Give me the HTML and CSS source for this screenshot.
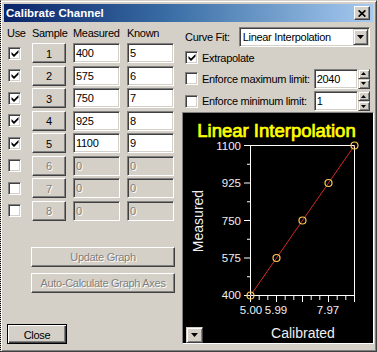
FILE: index.html
```html
<!DOCTYPE html>
<html>
<head>
<meta charset="utf-8">
<link rel="stylesheet" href="styles.css">
</head>
<body>
<div class="window">
  <div class="titlebar">
    <span class="title">Calibrate Channel</span>
    <div class="tbtn"><svg width="8" height="7" viewBox="0 0 8 7"><path d="M0.6 0.4L7.4 6.6M7.4 0.4L0.6 6.6" stroke="#000" stroke-width="1.7"/></svg></div>
  </div>
  <div class="body">
    <div class="left">
      <div class="cols hdr-row">
        <div>Use</div><div>Sample</div><div>Measured</div><div>Known</div>
      </div>
      <div class="cols rows">
        <div class="cb"><svg class="tick" width="8" height="8" viewBox="0 0 8 8"><path d="M0.5 3L3 5.5L7.5 1V3.5L3 8L0.5 5.5Z"/></svg></div><div class="btn">1</div><div class="edit">400</div><div class="edit">5</div>
        <div class="cb"><svg class="tick" width="8" height="8" viewBox="0 0 8 8"><path d="M0.5 3L3 5.5L7.5 1V3.5L3 8L0.5 5.5Z"/></svg></div><div class="btn">2</div><div class="edit">575</div><div class="edit">6</div>
        <div class="cb"><svg class="tick" width="8" height="8" viewBox="0 0 8 8"><path d="M0.5 3L3 5.5L7.5 1V3.5L3 8L0.5 5.5Z"/></svg></div><div class="btn">3</div><div class="edit">750</div><div class="edit">7</div>
        <div class="cb"><svg class="tick" width="8" height="8" viewBox="0 0 8 8"><path d="M0.5 3L3 5.5L7.5 1V3.5L3 8L0.5 5.5Z"/></svg></div><div class="btn">4</div><div class="edit">925</div><div class="edit">8</div>
        <div class="cb"><svg class="tick" width="8" height="8" viewBox="0 0 8 8"><path d="M0.5 3L3 5.5L7.5 1V3.5L3 8L0.5 5.5Z"/></svg></div><div class="btn">5</div><div class="edit">1100</div><div class="edit">9</div>
        <div class="cb"></div><div class="btn dis">6</div><div class="edit off">0</div><div class="edit off">0</div>
        <div class="cb"></div><div class="btn dis">7</div><div class="edit off">0</div><div class="edit off">0</div>
        <div class="cb"></div><div class="btn dis">8</div><div class="edit off">0</div><div class="edit off">0</div>
      </div>
      <div class="btn dis wide first">Update Graph</div>
      <div class="btn dis wide second">Auto-Calculate Graph Axes</div>
      <div class="btn close">Close</div>
    </div>
    <div class="right">
      <div class="combo-row">
        <span>Curve Fit:</span>
        <div class="combo">
          <span class="combo-text">Linear Interpolation</span>
          <div class="ddbtn"><svg width="7" height="4" viewBox="0 0 7 4"><path d="M0 0H7L3.5 4Z"/></svg></div>
        </div>
      </div>
      <div class="chk-row">
        <div class="cb"><svg class="tick" width="8" height="8" viewBox="0 0 8 8"><path d="M0.5 3L3 5.5L7.5 1V3.5L3 8L0.5 5.5Z"/></svg></div>
        <span>Extrapolate</span>
      </div>
      <div class="chk-row">
        <div class="cb"></div>
        <span>Enforce maximum limit:</span>
        <div class="spin-edit">
          <div class="edit num">2040</div>
          <div class="spin">
            <div class="sbtn"><svg width="5" height="3" viewBox="0 0 5 3"><path d="M0 3H5L2.5 0Z"/></svg></div>
            <div class="sbtn"><svg width="5" height="3" viewBox="0 0 5 3"><path d="M0 0H5L2.5 3Z"/></svg></div>
          </div>
        </div>
      </div>
      <div class="chk-row min-row">
        <div class="cb"></div>
        <span>Enforce minimum limit:</span>
        <div class="spin-edit">
          <div class="edit num">1</div>
          <div class="spin">
            <div class="sbtn"><svg width="5" height="3" viewBox="0 0 5 3"><path d="M0 3H5L2.5 0Z"/></svg></div>
            <div class="sbtn"><svg width="5" height="3" viewBox="0 0 5 3"><path d="M0 0H5L2.5 3Z"/></svg></div>
          </div>
        </div>
      </div>
      <div class="graph">
        <svg width="187" height="230" viewBox="0 0 187 230">
          <text class="gtitle" x="93.5" y="24" text-anchor="middle">Linear Interpolation</text>
          <g stroke="#fff" fill="none" stroke-width="1">
            <rect x="67.5" y="32.5" width="104" height="150"/>
            <path d="M61 32.5H67M64 51.25H67M61 70H67M64 88.75H67M61 107.5H67M64 126.25H67M61 145H67M64 163.75H67M61 182.5H67"/>
            <path d="M67.5 183V189M76.2 183V187M84.8 183V187M93.5 183V189M102.2 183V187M110.8 183V187M119.5 183V189M128.2 183V187M136.8 183V187M145.5 183V189M154.2 183V187M162.8 183V187M171.5 183V189"/>
          </g>
          <line x1="67.5" y1="182.5" x2="171.5" y2="32.5" stroke="#d42828" stroke-width="1"/>
          <g stroke="#ffc850" fill="none" stroke-width="1.2">
            <circle cx="67.5" cy="182.5" r="3.5"/>
            <circle cx="93.5" cy="145" r="3.5"/>
            <circle cx="119.5" cy="107.5" r="3.5"/>
            <circle cx="145.5" cy="70" r="3.5"/>
            <circle cx="171.5" cy="32.5" r="3.5"/>
          </g>
          <g class="ax">
            <text x="58" y="37" text-anchor="end">1100</text>
            <text x="58" y="74" text-anchor="end">925</text>
            <text x="58" y="111.5" text-anchor="end">750</text>
            <text x="58" y="149" text-anchor="end">575</text>
            <text x="58" y="186" text-anchor="end">400</text>
            <text x="68" y="201" text-anchor="middle">5.00</text>
            <text x="93" y="201" text-anchor="middle">5.99</text>
            <text x="145" y="201" text-anchor="middle">7.97</text>
          </g>
          <text class="alab" transform="translate(20,108) rotate(-90)" text-anchor="middle">Measured</text>
          <text class="alab" x="120" y="225" text-anchor="middle">Calibrated</text>
        </svg>
        <div class="gbtn"><svg width="7" height="4" viewBox="0 0 7 4"><path d="M0 0H7L3.5 4Z"/></svg></div>
      </div>
    </div>
  </div>
</div>
</body>
</html>
```

FILE: styles.css
```css
html, body {
  margin: 0;
  padding: 0;
}
body {
  background: #d4d0c8;
  font-family: "Liberation Sans", Arial, sans-serif;
  font-size: 11px;
  letter-spacing: -0.3px;
  color: #000;
}
.window {
  box-sizing: border-box;
  width: 377px;
  height: 352px;
  display: flex;
  flex-direction: column;
  background: #d4d0c8;
  border: 1px solid;
  border-color: #d4d0c8 #404040 #404040 #000;
  border-left-style: dotted;
  box-shadow: inset 1px 1px #fff, inset -1px -1px #808080;
  padding: 3px;
}
.titlebar {
  flex: none;
  height: 18px;
  display: flex;
  align-items: center;
  justify-content: space-between;
  padding: 0 3px 0 2px;
  background: linear-gradient(to right, #0a246a 0%, #3a6ea5 45%, #a6caf0 100%);
}
.title {
  color: #fff;
  font-weight: bold;
  font-size: 11.5px;
  letter-spacing: 0;
}
.tbtn {
  box-sizing: border-box;
  width: 16px;
  height: 14px;
  background: #d4d0c8;
  border: 1px solid;
  border-color: #fff #404040 #404040 #fff;
  box-shadow: inset -1px -1px #808080;
  display: flex;
  align-items: center;
  justify-content: center;
}
.body {
  flex: 1;
  min-height: 0;
  display: flex;
  gap: 7px;
  padding: 5px 2px 4px 3px;
}
.left {
  width: 168px;
  flex: none;
  display: flex;
  flex-direction: column;
}
.right {
  flex: 1;
  display: flex;
  flex-direction: column;
}
.cols {
  display: grid;
  grid-template-columns: 18px 34px 47px 47px;
  column-gap: 7px;
}
.hdr-row {
  height: 13px;
  line-height: 13px;
  margin-bottom: 3px;
}
.rows {
  grid-auto-rows: 20px;
  row-gap: 2.57px;
  align-items: center;
}
.cb {
  box-sizing: border-box;
  width: 13px;
  height: 13px;
  flex: none;
  background: #fff;
  border: 1px solid;
  border-color: #808080 #fff #fff #808080;
  box-shadow: inset 1px 1px #404040, inset -1px -1px #d4d0c8;
  display: flex;
  align-items: center;
  justify-content: center;
}
.rows .cb {
  margin-left: 1px;
}
.tick {
  display: block;
  margin-top: -1px;
}
.btn {
  box-sizing: border-box;
  height: 20px;
  background: #d4d0c8;
  border: 1px solid;
  border-color: #fff #404040 #404040 #fff;
  box-shadow: inset -1px -1px #808080;
  display: flex;
  align-items: center;
  justify-content: center;
  padding-top: 1px;
}
.dis {
  color: #808080;
  text-shadow: 1px 1px #fff;
}
.edit {
  box-sizing: border-box;
  height: 20px;
  background: #fff;
  border: 1px solid;
  border-color: #808080 #fff #fff #808080;
  box-shadow: inset 1px 1px #404040, inset -1px -1px #d4d0c8;
  padding: 1px 2px 0 2px;
  line-height: 16px;
  white-space: nowrap;
  overflow: hidden;
}
.edit.off {
  background: #d4d0c8;
  color: #808080;
  text-shadow: 1px 1px #fff;
}
.wide {
  width: 144px;
  margin-left: 24px;
}
.wide.first {
  margin-top: 26px;
}
.wide.second {
  margin-top: 6px;
}
.close {
  margin-top: auto;
  width: 60px;
  border: 1px solid #000;
  box-shadow: inset 1px 1px #fff, inset -1px -1px #404040, inset -2px -2px #808080;
}
.combo-row {
  height: 20px;
  display: flex;
  align-items: center;
  justify-content: space-between;
  padding: 0 4px 0 3px;
}
.combo {
  box-sizing: border-box;
  width: 131px;
  height: 20px;
  background: #fff;
  border: 1px solid;
  border-color: #808080 #fff #fff #808080;
  box-shadow: inset 1px 1px #404040, inset -1px -1px #d4d0c8;
  padding: 1px;
  display: flex;
  align-items: center;
}
.combo-text {
  flex: 1;
  padding-left: 2px;
  white-space: nowrap;
}
.ddbtn, .sbtn, .gbtn {
  box-sizing: border-box;
  background: #d4d0c8;
  border: 1px solid;
  border-color: #d4d0c8 #404040 #404040 #d4d0c8;
  box-shadow: inset 1px 1px #fff, inset -1px -1px #808080;
  display: flex;
  align-items: center;
  justify-content: center;
}
.ddbtn {
  width: 15px;
  height: 16px;
  flex: none;
}
.ddbtn svg, .sbtn svg, .gbtn svg {
  display: block;
}
.chk-row {
  height: 21px;
  display: flex;
  align-items: center;
  gap: 4px;
  padding: 0 4px 0 3px;
  white-space: nowrap;
}
.min-row {
  margin-top: 1.5px;
}
.spin-edit {
  margin-left: auto;
  display: flex;
  height: 20px;
}
.edit.num {
  width: 44px;
}
.spin {
  width: 12px;
  display: flex;
  flex-direction: column;
}
.sbtn {
  height: 10px;
}
.graph {
  flex: 1;
  margin-top: 0.5px;
  position: relative;
  background: #000;
  border: 1px solid;
  border-color: #808080 #fff #fff #808080;
  letter-spacing: 0;
}
.graph svg {
  display: block;
}
.gtitle {
  fill: #ffff00;
  stroke: #ffff00;
  stroke-width: 0.7px;
  font-family: "Liberation Sans", Arial, sans-serif;
  font-size: 18.5px;
}
.ax text {
  fill: #f0f0f0;
  font-family: "Liberation Sans", Arial, sans-serif;
  font-size: 11.5px;
}
.alab {
  fill: #f0f0f0;
  font-family: "Liberation Sans", Arial, sans-serif;
  font-size: 14px;
}
.gbtn {
  position: absolute;
  left: 3px;
  top: 214px;
  width: 17px;
  height: 16px;
}
```
